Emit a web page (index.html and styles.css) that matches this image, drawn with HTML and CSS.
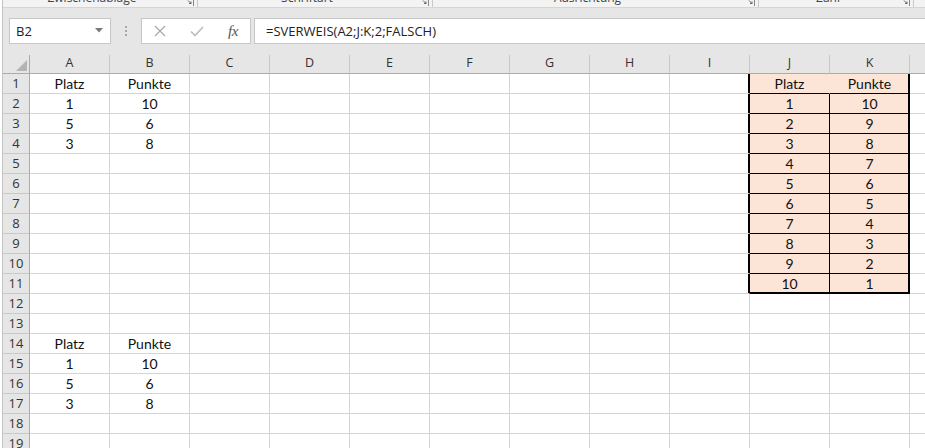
FILE: index.html
```html
<!DOCTYPE html>
<html lang="de">
<head>
<meta charset="utf-8">
<title>SVERWEIS</title>
<link rel="stylesheet" href="styles.css">
</head>
<body>
<div class="app">
  <div class="ribbon">
    <div class="group g1"><span class="glabel">Zwischenablage</span><span class="launcher"><svg width="8" height="6" viewBox="0 0 8 6"><path d="M1 0.5 L4 3.5 M4 1.5 V3.5 H2" stroke="#666" fill="none"/><path d="M6.5 0 V6" stroke="#888"/></svg></span></div>
    <div class="group g2"><span class="glabel">Schriftart</span><span class="launcher"><svg width="8" height="6" viewBox="0 0 8 6"><path d="M1 0.5 L4 3.5 M4 1.5 V3.5 H2" stroke="#666" fill="none"/><path d="M6.5 0 V6" stroke="#888"/></svg></span></div>
    <div class="group g3"><span class="glabel">Ausrichtung</span><span class="launcher"><svg width="8" height="6" viewBox="0 0 8 6"><path d="M1 0.5 L4 3.5 M4 1.5 V3.5 H2" stroke="#666" fill="none"/><path d="M6.5 0 V6" stroke="#888"/></svg></span></div>
    <div class="group g4"><span class="glabel">Zahl</span><span class="launcher"><svg width="8" height="6" viewBox="0 0 8 6"><path d="M1 0.5 L4 3.5 M4 1.5 V3.5 H2" stroke="#666" fill="none"/><path d="M6.5 0 V6" stroke="#888"/></svg></span></div>
  </div>

  <div class="fbar">
    <div class="namebox"><span class="nbtext">B2</span><svg class="caret" width="8" height="5" viewBox="0 0 8 5"><path d="M0 0 H8 L4 4.5 Z" fill="#7a7a7a"/></svg></div>
    <div class="grip"><i></i><i></i><i></i></div>
    <div class="fbtns">
      <svg class="ico" width="14" height="12" viewBox="0 0 14 12"><path d="M2 1 L12 11 M12 1 L2 11" stroke="#a8a8a8" stroke-width="1.2" fill="none"/></svg>
      <svg class="ico" width="14" height="12" viewBox="0 0 14 12"><path d="M1 6.5 L5 10.5 L13 2" stroke="#bdbdbd" stroke-width="1.6" fill="none"/></svg>
      <span class="fx">fx</span>
    </div>
    <div class="formula">=SVERWEIS(A2;J:K;2;FALSCH)</div>
  </div>

  <div class="sheet">
    <div class="corner"><svg width="11" height="11" viewBox="0 0 11 11"><path d="M0 11 L11 0 V11 Z" fill="#b4b4b4"/></svg></div>
    <div class="ch">A</div><div class="ch">B</div><div class="ch">C</div><div class="ch">D</div><div class="ch">E</div><div class="ch">F</div><div class="ch">G</div><div class="ch">H</div><div class="ch">I</div><div class="ch">J</div><div class="ch">K</div><div class="ch">L</div>

    <div class="rh">1</div><div class="c">Platz</div><div class="c">Punkte</div><div class="c"></div><div class="c"></div><div class="c"></div><div class="c"></div><div class="c"></div><div class="c"></div><div class="c tl"></div><div class="c t t1">Platz</div><div class="c t tr">Punkte</div><div class="c"></div>
    <div class="rh">2</div><div class="c">1</div><div class="c">10</div><div class="c"></div><div class="c"></div><div class="c"></div><div class="c"></div><div class="c"></div><div class="c"></div><div class="c tl"></div><div class="c t tv">1</div><div class="c t tr">10</div><div class="c"></div>
    <div class="rh">3</div><div class="c">5</div><div class="c">6</div><div class="c"></div><div class="c"></div><div class="c"></div><div class="c"></div><div class="c"></div><div class="c"></div><div class="c tl"></div><div class="c t tv">2</div><div class="c t tr">9</div><div class="c"></div>
    <div class="rh">4</div><div class="c">3</div><div class="c">8</div><div class="c"></div><div class="c"></div><div class="c"></div><div class="c"></div><div class="c"></div><div class="c"></div><div class="c tl"></div><div class="c t tv">3</div><div class="c t tr">8</div><div class="c"></div>
    <div class="rh">5</div><div class="c"></div><div class="c"></div><div class="c"></div><div class="c"></div><div class="c"></div><div class="c"></div><div class="c"></div><div class="c"></div><div class="c tl"></div><div class="c t tv">4</div><div class="c t tr">7</div><div class="c"></div>
    <div class="rh">6</div><div class="c"></div><div class="c"></div><div class="c"></div><div class="c"></div><div class="c"></div><div class="c"></div><div class="c"></div><div class="c"></div><div class="c tl"></div><div class="c t tv">5</div><div class="c t tr">6</div><div class="c"></div>
    <div class="rh">7</div><div class="c"></div><div class="c"></div><div class="c"></div><div class="c"></div><div class="c"></div><div class="c"></div><div class="c"></div><div class="c"></div><div class="c tl"></div><div class="c t tv">6</div><div class="c t tr">5</div><div class="c"></div>
    <div class="rh">8</div><div class="c"></div><div class="c"></div><div class="c"></div><div class="c"></div><div class="c"></div><div class="c"></div><div class="c"></div><div class="c"></div><div class="c tl"></div><div class="c t tv">7</div><div class="c t tr">4</div><div class="c"></div>
    <div class="rh">9</div><div class="c"></div><div class="c"></div><div class="c"></div><div class="c"></div><div class="c"></div><div class="c"></div><div class="c"></div><div class="c"></div><div class="c tl"></div><div class="c t tv">8</div><div class="c t tr">3</div><div class="c"></div>
    <div class="rh">10</div><div class="c"></div><div class="c"></div><div class="c"></div><div class="c"></div><div class="c"></div><div class="c"></div><div class="c"></div><div class="c"></div><div class="c tl"></div><div class="c t tv">9</div><div class="c t tr">2</div><div class="c"></div>
    <div class="rh">11</div><div class="c"></div><div class="c"></div><div class="c"></div><div class="c"></div><div class="c"></div><div class="c"></div><div class="c"></div><div class="c"></div><div class="c tl"></div><div class="c t tv tbot">10</div><div class="c t tr tbotr">1</div><div class="c"></div>
    <div class="rh">12</div><div class="c"></div><div class="c"></div><div class="c"></div><div class="c"></div><div class="c"></div><div class="c"></div><div class="c"></div><div class="c"></div><div class="c"></div><div class="c"></div><div class="c"></div><div class="c"></div>
    <div class="rh">13</div><div class="c"></div><div class="c"></div><div class="c"></div><div class="c"></div><div class="c"></div><div class="c"></div><div class="c"></div><div class="c"></div><div class="c"></div><div class="c"></div><div class="c"></div><div class="c"></div>
    <div class="rh">14</div><div class="c">Platz</div><div class="c">Punkte</div><div class="c"></div><div class="c"></div><div class="c"></div><div class="c"></div><div class="c"></div><div class="c"></div><div class="c"></div><div class="c"></div><div class="c"></div><div class="c"></div>
    <div class="rh">15</div><div class="c">1</div><div class="c">10</div><div class="c"></div><div class="c"></div><div class="c"></div><div class="c"></div><div class="c"></div><div class="c"></div><div class="c"></div><div class="c"></div><div class="c"></div><div class="c"></div>
    <div class="rh">16</div><div class="c">5</div><div class="c">6</div><div class="c"></div><div class="c"></div><div class="c"></div><div class="c"></div><div class="c"></div><div class="c"></div><div class="c"></div><div class="c"></div><div class="c"></div><div class="c"></div>
    <div class="rh">17</div><div class="c">3</div><div class="c">8</div><div class="c"></div><div class="c"></div><div class="c"></div><div class="c"></div><div class="c"></div><div class="c"></div><div class="c"></div><div class="c"></div><div class="c"></div><div class="c"></div>
    <div class="rh">18</div><div class="c"></div><div class="c"></div><div class="c"></div><div class="c"></div><div class="c"></div><div class="c"></div><div class="c"></div><div class="c"></div><div class="c"></div><div class="c"></div><div class="c"></div><div class="c"></div>
    <div class="rh">19</div><div class="c"></div><div class="c"></div><div class="c"></div><div class="c"></div><div class="c"></div><div class="c"></div><div class="c"></div><div class="c"></div><div class="c"></div><div class="c"></div><div class="c"></div><div class="c"></div>
  </div>
</div>
</body>
</html>
```

FILE: styles.css
```css
html, body {
  margin: 0;
  padding: 0;
  background: #ffffff;
  overflow: hidden;
}

body {
  width: 925px;
  height: 448px;
  font-family: "Open Sans", "Noto Sans", sans-serif;
}

.app {
  margin-left: 2px;
  border-left: 1px solid #c4c4c4;
  height: 448px;
  overflow: hidden;
}

/* ribbon group labels (cut off, as in the reference) */
.ribbon {
  display: flex;
  height: 7px;
  background: #f3f3f3;
  border-bottom: 1px solid #d5d5d5;
  overflow: hidden;
}

.group {
  display: flex;
  flex: none;
  border-right: 1px solid #c8c8c8;
  height: 7px;
}

.g1 { width: 194px; }
.g2 { width: 234px; }
.g3 { width: 325px; }
.g4 { width: 154px; }

.glabel {
  flex: 1;
  text-align: center;
  font-size: 12px;
  line-height: 12px;
  margin-top: -8px;
  color: #444444;
  white-space: nowrap;
}

.launcher {
  width: 16px;
  display: flex;
  align-items: flex-start;
  justify-content: flex-end;
  padding-right: 2px;
  box-sizing: border-box;
}

/* formula bar */
.fbar {
  display: flex;
  align-items: flex-start;
  height: 47px;
  background: #e6e6e6;
  padding-top: 10px;
  box-sizing: border-box;
}

.namebox {
  margin-left: 6px;
  width: 102px;
  height: 26px;
  box-sizing: border-box;
  background: #ffffff;
  border: 1px solid #c6c6c6;
  display: flex;
  align-items: center;
  justify-content: space-between;
  padding: 0 7px 0 6px;
}

.nbtext {
  font-size: 13px;
  line-height: 24px;
  color: #222222;
}

.caret {
  margin-top: -1px;
}

.grip {
  width: 30px;
  height: 26px;
  display: flex;
  flex-direction: column;
  align-items: center;
  justify-content: center;
  gap: 2px;
}

.grip i {
  display: block;
  width: 2px;
  height: 2px;
  background: #a8a8a8;
}

.fbtns {
  width: 110px;
  height: 26px;
  box-sizing: border-box;
  background: #ffffff;
  border: 1px solid #c6c6c6;
  display: flex;
  align-items: center;
  padding-left: 11px;
  gap: 23px;
}

.fx {
  font-family: "Liberation Serif", "DejaVu Serif", serif;
  font-style: italic;
  font-size: 15px;
  line-height: 24px;
  color: #555555;
  margin-left: 1px;
  letter-spacing: -0.5px;
}

.formula {
  flex: 1;
  margin-left: 3px;
  height: 26px;
  box-sizing: border-box;
  background: #ffffff;
  border: 1px solid #c6c6c6;
  border-right: none;
  padding-left: 11px;
  font-size: 13px;
  line-height: 24px;
  color: #222222;
  white-space: nowrap;
}

/* sheet grid */
.sheet {
  display: grid;
  grid-template-columns: 27px repeat(12, 80px);
  grid-template-rows: 19px;
  grid-auto-rows: 20px;
  width: max-content;
}

.corner {
  background: #e6e6e6;
  border-right: 1px solid #ababab;
  border-bottom: 1px solid #ababab;
  box-sizing: border-box;
  display: flex;
  align-items: flex-end;
  justify-content: flex-end;
  padding: 0 2px 2px 0;
}

.ch {
  background: #e6e6e6;
  border-right: 1px solid #c8c8c8;
  border-bottom: 1px solid #ababab;
  box-sizing: border-box;
  text-align: center;
  font-size: 12.5px;
  line-height: 15px;
  color: #333333;
}

.rh {
  background: #e6e6e6;
  border-right: 1px solid #ababab;
  border-bottom: 1px solid #c8c8c8;
  box-sizing: border-box;
  text-align: center;
  font-size: 13px;
  line-height: 18px;
  color: #333333;
}

.c {
  border-right: 1px solid #d4d4d4;
  border-bottom: 1px solid #d4d4d4;
  box-sizing: border-box;
  text-align: center;
  font-family: Lato, "Liberation Sans", sans-serif;
  font-size: 14px;
  line-height: 19px;
  color: #111111;
  white-space: nowrap;
}

/* lookup table J1:K11 */
.t {
  background: #fce4d6;
  border-bottom-color: #000000;
}

.t1 {
  border-right-color: #fce4d6;
}

.tv {
  border-right-color: #000000;
}

.tr {
  border-right-color: #000000;
  box-shadow: inset -1px 0 0 #000000;
}

.tl {
  border-right-color: #000000;
  box-shadow: inset -1px 0 0 #000000;
}

.tbot {
  box-shadow: inset 0 -1px 0 #000000;
}

.tbotr {
  box-shadow: inset -1px 0 0 #000000, inset 0 -1px 0 #000000;
}
```
